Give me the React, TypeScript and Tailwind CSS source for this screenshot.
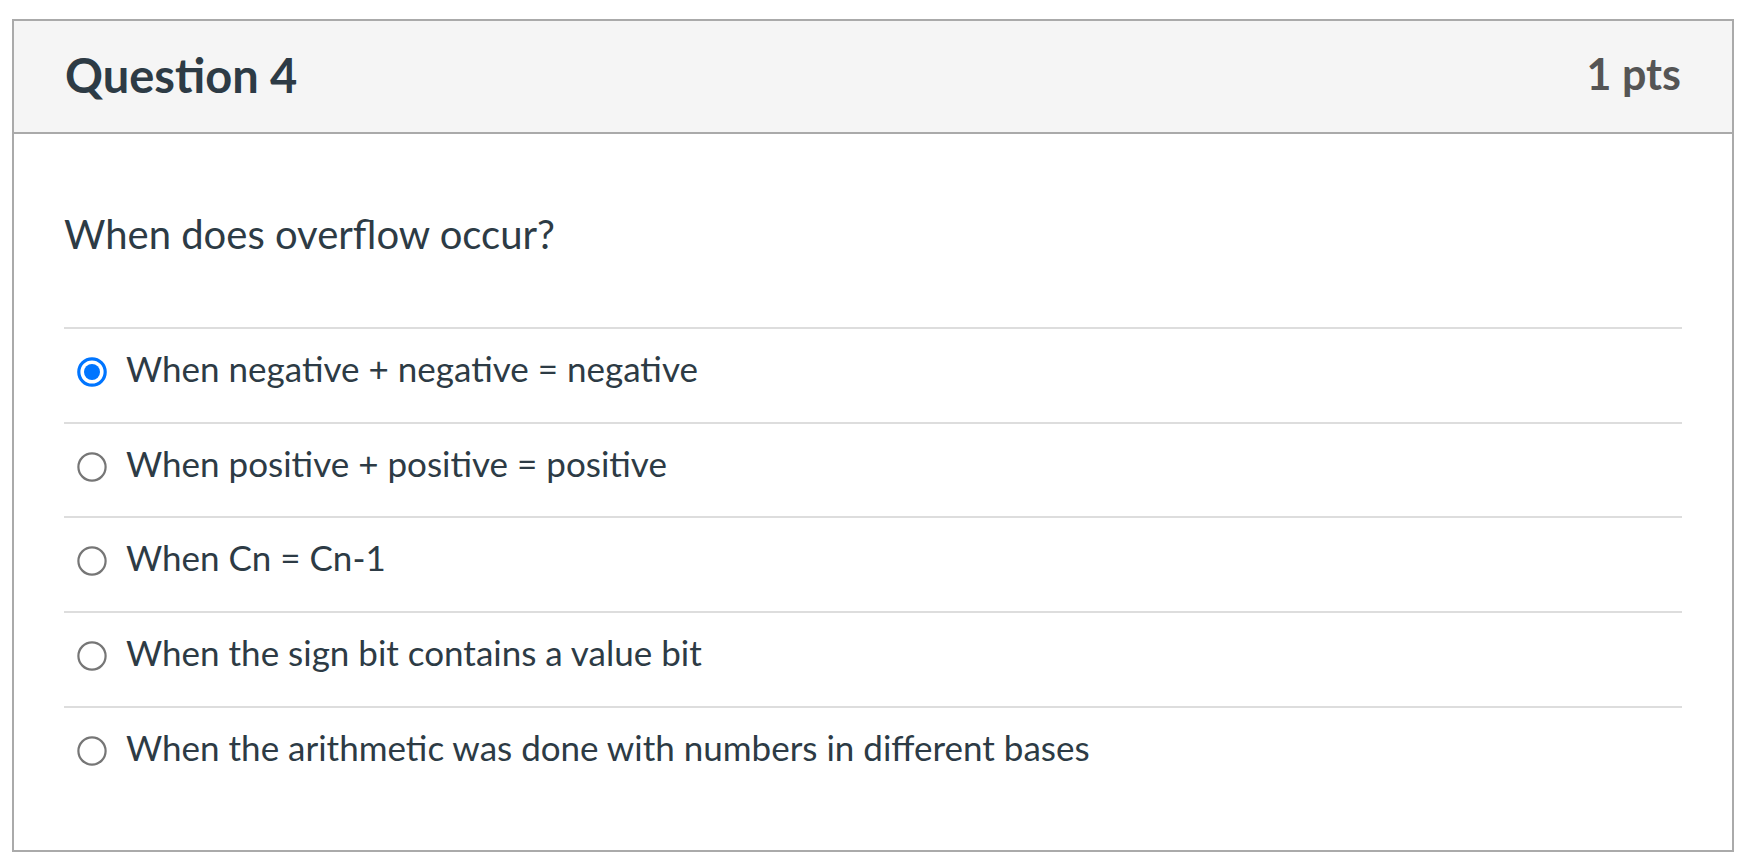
import { useState } from 'react'

const OPTIONS = [
  'When negative + negative = negative',
  'When positive + positive = positive',
  'When Cn = Cn-1',
  'When the sign bit contains a value bit',
  'When the arithmetic was done with numbers in different bases',
]

function Radio({ checked }: { checked: boolean }) {
  return (
    <svg width="30" height="30" viewBox="0 0 30 30" className="shrink-0 mt-[10px]">
      {checked ? (
        <>
          <circle cx="15" cy="15" r="13.2" fill="white" stroke="#0075ff" strokeWidth="3.2" />
          <circle cx="15" cy="15" r="8" fill="#0075ff" />
        </>
      ) : (
        <circle cx="15" cy="15" r="13.6" fill="white" stroke="#767676" strokeWidth="2.2" />
      )}
    </svg>
  )
}

export default function App() {
  const [picked, setPicked] = useState(0)

  return (
    <div className="min-h-screen bg-white pt-[19px] pl-[12px] font-['Lato','Open_Sans',sans-serif] text-[#2d3b45]">
      <div className="w-[1722px] h-[833px] border-2 border-[#aaaaaa] flex flex-col">
        <div className="h-[113px] bg-[#f5f5f5] border-b-2 border-[#aaaaaa] px-[51px] pb-[2px] flex items-center justify-between">
          <h2 className="text-[47px] font-bold leading-[1.2]">Question 4</h2>
          <span className="text-[43px] font-bold leading-[1.2] text-[#555555] pb-[4px]">1 pts</span>
        </div>

        <div className="px-[50px]">
          <p className="mt-[76px] text-[40px] leading-[1.2]">When does overflow occur?</p>

          <div className="mt-[69px] border-b-2 border-transparent">
            {OPTIONS.map((text, i) => (
              <label
                key={text}
                onClick={() => setPicked(i)}
                className="flex items-start gap-[19px] pl-[13px] h-[94.7px] pt-[18px] cursor-pointer border-t-2 border-[#dddddd]"
              >
                <Radio checked={picked === i} />
                <span className="text-[35px] leading-[1.2]">{text}</span>
              </label>
            ))}
          </div>
        </div>
      </div>
    </div>
  )
}
